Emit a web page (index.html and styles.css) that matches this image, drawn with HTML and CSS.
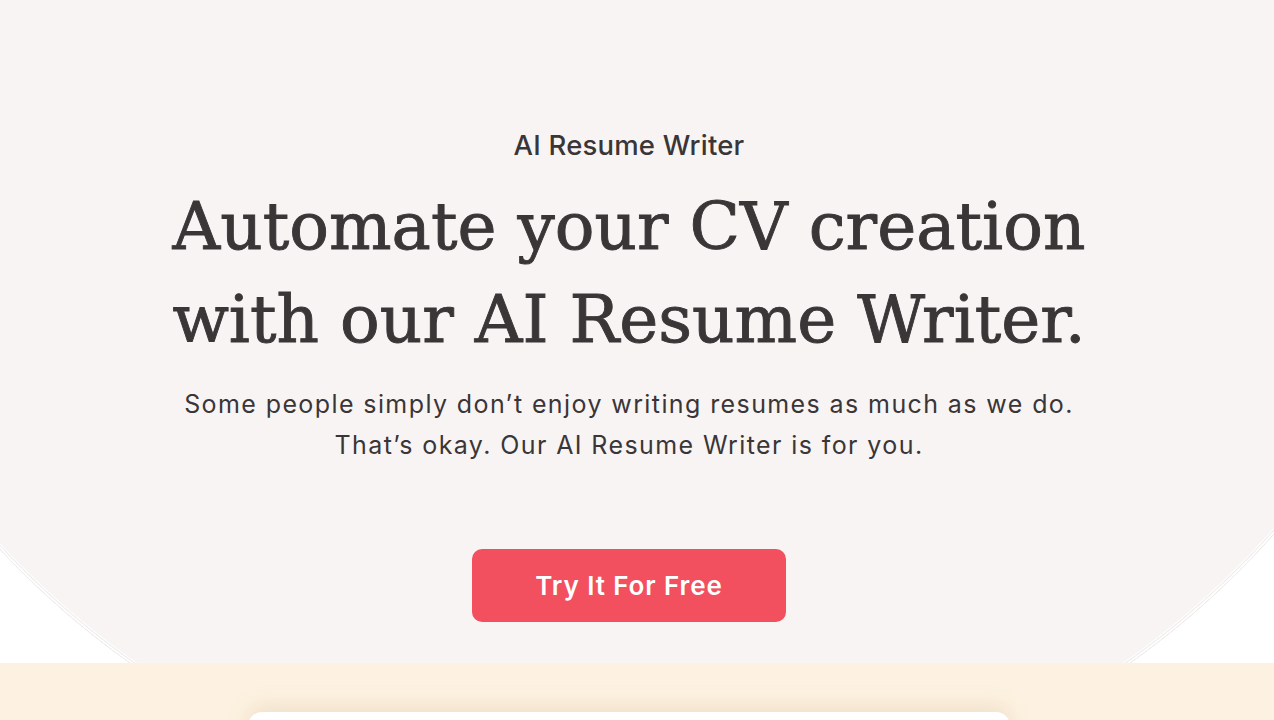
FILE: index.html
```html
<!DOCTYPE html>
<html lang="en">
<head>
<meta charset="utf-8">
<title>AI Resume Writer</title>
<link rel="stylesheet" href="styles.css">
</head>
<body>
<section class="hero">
  <p class="eyebrow">AI Resume Writer</p>
  <h1 class="title">Automate your CV creation<br>with our AI Resume Writer.</h1>
  <p class="lead">Some people simply don’t enjoy writing resumes as much as we do.<br>That’s okay. Our AI Resume Writer is for you.</p>
  <a class="cta" href="#">Try It For Free</a>
</section>
<section class="band">
  <div class="card"></div>
</section>
</body>
</html>
```
FILE: styles.css
```css
html, body {
  margin: 0;
  padding: 0;
}
body {
  background: #ffffff;
  overflow: hidden;
  height: 720px;
  font-family: "Inter", "Liberation Sans", sans-serif;
  color: #3a3637;
}
.hero {
  height: 663px;
  box-sizing: border-box;
  padding-top: 126px;
  padding-right: 16px;
  display: flex;
  flex-direction: column;
  align-items: center;
  text-align: center;
  background:
    radial-gradient(circle 862px at 630px -40px,
      #f9f4f4 0, #f9f4f4 858px, #ffffff 859px, #eeeaea 860px, #ffffff 861px, #ffffff 862px, #e9e6e6 862.5px, rgba(255,255,255,0) 863.5px),
    #ffffff;
}
.eyebrow {
  margin: 0;
  font-family: "Inter", "Liberation Sans", sans-serif;
  font-weight: 500;
  font-size: 27.5px;
  line-height: 38px;
  letter-spacing: 0.2px;
  color: #3a3637;
}
.title {
  margin: 16px 0 0;
  font-family: "DejaVu Serif", "Liberation Serif", serif;
  font-weight: 400;
  font-size: 66px;
  line-height: 93px;
  -webkit-text-stroke: 0.9px #3a3637;
  color: #3a3637;
}
.lead {
  margin: 18px 0 0;
  font-family: "Inter", "Liberation Sans", sans-serif;
  font-size: 25px;
  line-height: 41px;
  font-weight: 400;
  letter-spacing: 1.4px;
  color: #3a3637;
}
.cta {
  margin-top: 83px;
  width: 314px;
  height: 73px;
  display: flex;
  align-items: center;
  justify-content: center;
  background: #f24f5f;
  border-radius: 10px;
  color: #ffffff;
  text-decoration: none;
  font-family: "Inter", "Liberation Sans", sans-serif;
  font-weight: 600;
  font-size: 26px;
  letter-spacing: 0.9px;
}
.band {
  height: 57px;
  background: #fdf2e1;
  display: flex;
  justify-content: center;
  padding-top: 49px;
  box-sizing: border-box;
  overflow: hidden;
}
.card {
  width: 762px;
  height: 200px;
  margin-left: -16px;
  flex-shrink: 0;
  background: #ffffff;
  border-radius: 14px;
  box-shadow: 0 -6px 20px rgba(200, 170, 130, 0.25);
}
```
